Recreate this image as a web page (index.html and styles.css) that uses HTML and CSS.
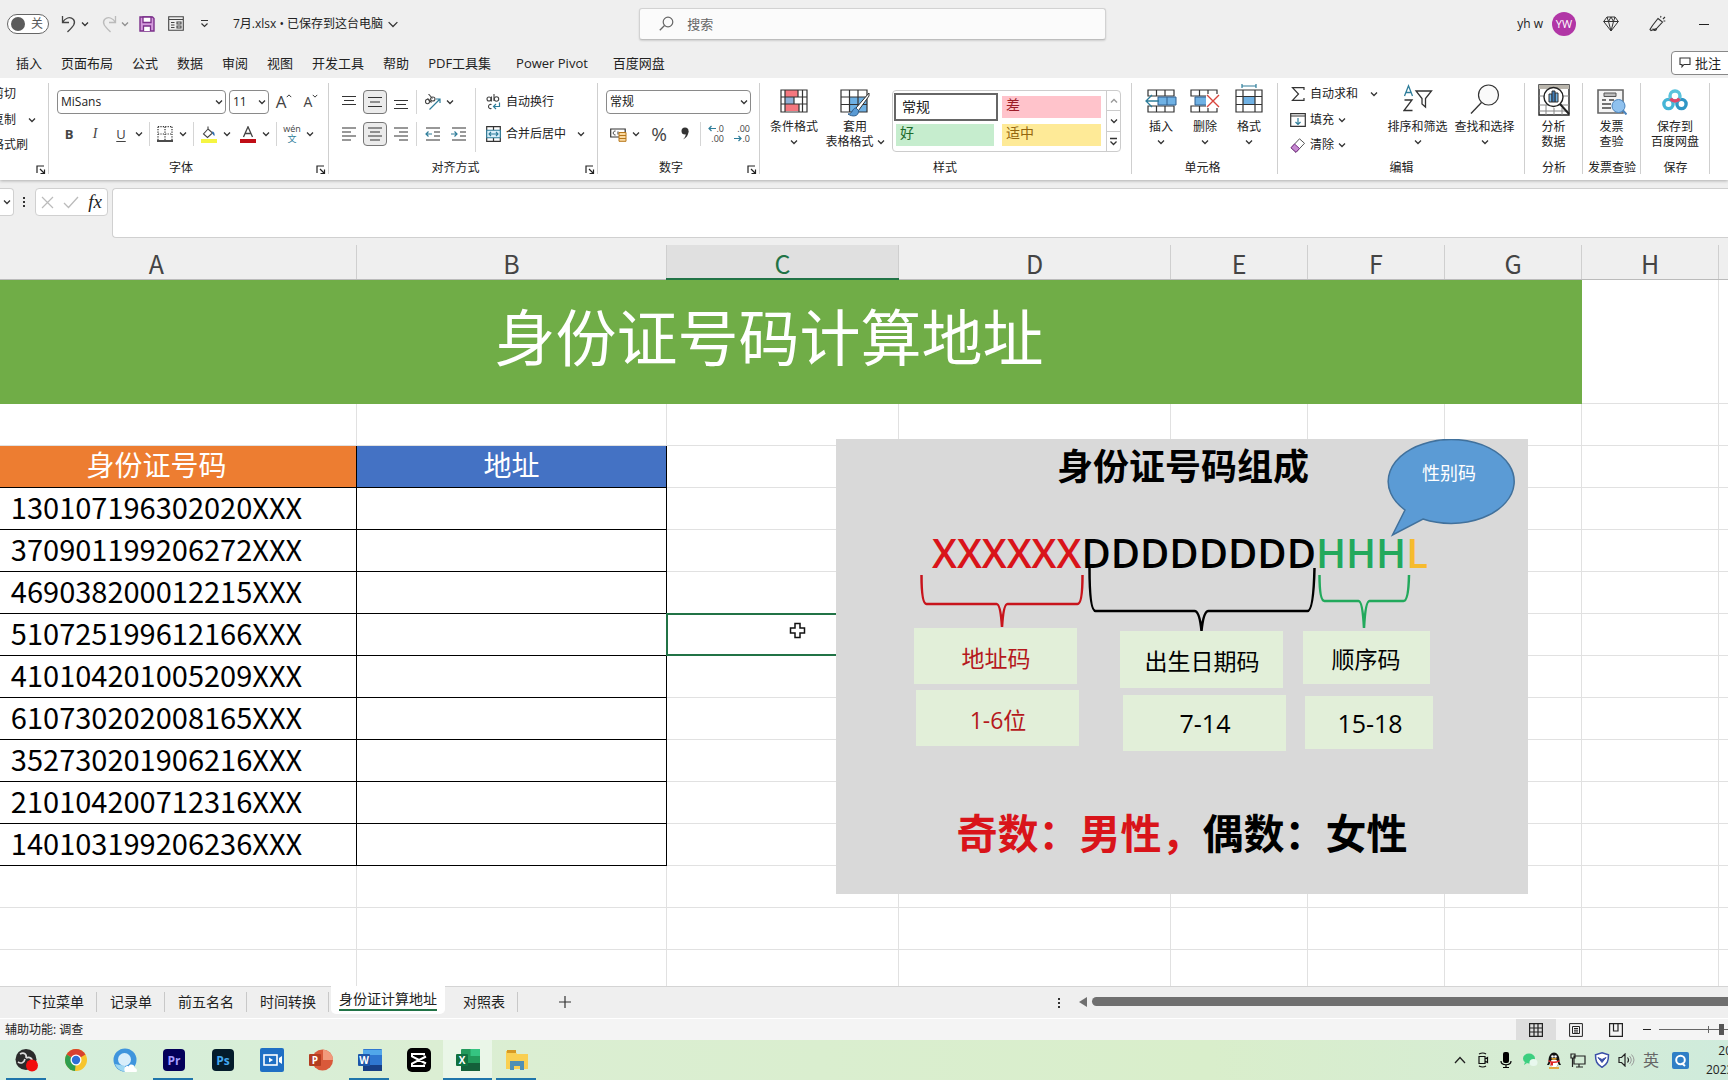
FILE: index.html
```html
<!DOCTYPE html>
<html lang="zh-CN">
<head>
    <meta charset="UTF-8">
    <meta name="viewport" content="width=device-width, initial-scale=1.0">
    <title>7月.xlsx</title>
    <link rel="stylesheet" href="styles.css">
</head>
<body>
    <!-- 公用图标 -->
    <svg class="defs" width="0" height="0">
        <symbol id="chev" viewBox="0 0 8 8"><path d="M1 2.5l3 3 3-3" fill="none" stroke="currentColor" stroke-width="1.3"/></symbol>
        <symbol id="launcher" viewBox="0 0 10 10"><path d="M1 8V1h7M4 4l4 4M8.5 4.5v4h-4" fill="none" stroke="currentColor" stroke-width="1.2"/></symbol>
    </svg>

    <!-- 标题栏 -->
    <header class="titlebar">
        <div class="quick">
            <button class="toggle" aria-label="自动保存"><i></i>关</button>
            <button class="qbtn"><svg width="16" height="18" viewBox="0 0 16 18"><path d="M1.5 1v6.500h6.500M1.500 7.500C4 3 9 1 12.500 4.500c3 4-1 7.500-6 12.500" fill="none" stroke="#444" stroke-width="1.300"/></svg></button>
            <svg class="chev"><use href="#chev"/></svg>
            <button class="qbtn off"><svg width="16" height="18" viewBox="0 0 16 18"><path d="M14.500 1v6.500H8M14.500 7.500C12 3 7 1 3.500 4.500c-3 4 1 7.500 6 12.500" fill="none" stroke="#888" stroke-width="1.300"/></svg></button>
            <svg class="chev off"><use href="#chev"/></svg>
            <button class="qbtn save"><svg width="16" height="16" viewBox="0 0 16 16"><path d="M1 1h12.500L15 2.500V15H1z" fill="#d49bdc" stroke="#7b2f8a" stroke-width="1.400"/><path d="M4 1h8v5.500H4zM4.500 15v-5h7v5" fill="#fff" stroke="#7b2f8a" stroke-width="1.300"/></svg></button>
            <button class="qbtn form"><svg width="16" height="15" viewBox="0 0 16 15"><path d="M.7.7h14.600v13.600H.7zM.7 3.500h14.600M3 6.500h3.500M3 9h3.500M3 11.500h3.500M9 6h4v2H9zM9 10h4v2H9z" fill="none" stroke="#444" stroke-width="1.100"/></svg></button>
            <button class="qbtn more"><svg width="9" height="9" viewBox="0 0 9 9"><path d="M1 1.500h7M1.500 4.500l3 3 3-3" fill="none" stroke="#333" stroke-width="1.200"/></svg></button>
            <button class="filename">7月.xlsx • 已保存到这台电脑<svg width="10" height="10" viewBox="0 0 8 8"><path d="M.5 2.500l3.500 3.500 3.500-3.500" fill="none" stroke="#333"/></svg></button>
        </div>
        <label class="search">
            <svg width="15" height="15" viewBox="0 0 15 15"><circle cx="9" cy="6" r="4.800" fill="none" stroke="#666" stroke-width="1.200"/><path d="M5.500 9.500L.8 14.200" stroke="#666" stroke-width="1.300"/></svg>
            <input type="text" placeholder="搜索" aria-label="搜索">
        </label>
        <div class="account">
            <span>yh w</span>
            <span class="avatar">YW</span>
            <button class="abtn"><svg width="16" height="16" viewBox="0 0 16 16"><path d="M4 1h8l3.300 4.500L8 15 .7 5.500zM.7 5.500h14.600M4 1l1.500 4.500L8 15l2.500-9.500L12 1M5.500 5.500L8 1l2.500 4.500" fill="none" stroke="#333"/></svg></button>
            <button class="abtn"><svg width="17" height="17" viewBox="0 0 17 17"><path d="M9 3.500l4.500 3.500-6 6.500-5.500 2-1-1 2.500-4zM4 13.500c0 3 4 2 3.500 0M11.500 2.500L12 1M14 4l2-2M14.500 6h1.800" fill="none" stroke="#333" stroke-width="1.100"/></svg></button>
            <button class="abtn min"><svg width="10" height="10" viewBox="0 0 10 10"><path d="M0 5.500h10" stroke="#222"/></svg></button>
        </div>
    </header>

    <nav class="menu">
        <a href="#">插入</a><a href="#">页面布局</a><a href="#">公式</a><a href="#">数据</a><a href="#">审阅</a><a href="#">视图</a><a href="#">开发工具</a><a href="#">帮助</a><a href="#">PDF工具集</a><a class="wide" href="#">Power Pivot</a><a href="#">百度网盘</a>
        <button class="comment"><svg width="12" height="11" viewBox="0 0 12 11"><path d="M1 1h10v6.500H5L3 9.800V7.500H1z" fill="none" stroke="#333" stroke-width="1.100"/></svg>批注</button>
    </nav>

    <!-- 功能区 -->
    <section class="ribbon">
        <div class="group g-clip">
            <div class="tools stack">
                <button>剪切</button>
                <button>复制<svg class="chev far"><use href="#chev"/></svg></button>
                <button>格式刷</button>
            </div>
            <div class="cap"><svg class="launch"><use href="#launcher"/></svg></div>
        </div>

        <div class="group g-font">
            <div class="tools rows">
                <div class="row first">
                    <span class="pick pick-font"><select aria-label="字体"><option>MiSans</option></select><svg class="chev"><use href="#chev"/></svg></span>
                    <span class="pick pick-size"><select aria-label="字号"><option>11</option></select><svg class="chev"><use href="#chev"/></svg></span>
                    <button class="tool grow big">A<svg class="chev up"><use href="#chev"/></svg></button>
                    <button class="tool grow">A<svg class="chev"><use href="#chev"/></svg></button>
                </div>
                <div class="row">
                    <button class="tool bold">B</button><i class="gap"></i>
                    <button class="tool italic">I</button><i class="gap"></i>
                    <button class="tool under">U</button><svg class="chev"><use href="#chev"/></svg>
                    <i class="sep"></i>
                    <button class="tool"><svg width="16" height="16" viewBox="0 0 16 16"><path d="M1 .7h14M1 .7V15M15 .7V15M8 .7V15M1 8h14" fill="none" stroke="#333" stroke-width="1.200" stroke-dasharray="1.200 1.200"/><path d="M0 15h16" stroke="#111" stroke-width="1.500"/></svg></button><svg class="chev"><use href="#chev"/></svg>
                    <i class="sep"></i>
                    <button class="tool"><svg width="16" height="17" viewBox="0 0 16 17"><path d="M7 3L2.500 8l4 3.500L11.500 7 7 3V.5" fill="#fff" stroke="#444" stroke-width="1.100"/><path d="M11 5.500c2 0 3 2 2.500 4.500-1.500-1-2-2.500-2.500-4.500z" fill="#2b6cb0"/><path d="M0 13h16v4H0z" fill="#f5f542"/></svg></button><svg class="chev"><use href="#chev"/></svg><i class="gap"></i>
                    <button class="tool"><svg width="16" height="17" viewBox="0 0 16 17"><path d="M3.500 11L8 .8 12.500 11M5 7.500h6" fill="none" stroke="#444" stroke-width="1.300"/><path d="M0 13h16v4H0z" fill="#c00d16"/></svg></button><svg class="chev"><use href="#chev"/></svg>
                    <i class="sep"></i>
                    <button class="tool pinyin"><span>wén</span><span class="blue">文</span></button><svg class="chev"><use href="#chev"/></svg>
                </div>
            </div>
            <div class="cap">字体<svg class="launch"><use href="#launcher"/></svg></div>
        </div>

        <div class="group g-align">
            <div class="tools side">
                <div class="rows">
                    <div class="row first gaps">
                        <button class="tool"><svg width="14" height="14"><path d="M0 1.500h14M2 5.500h10M0 9.500h14" stroke="#333" stroke-width="1.200"/></svg></button>
                        <button class="tool on"><svg width="14" height="14"><path d="M0 2.500h14M2 7h10M0 11.500h14" stroke="#333" stroke-width="1.200"/></svg></button>
                        <button class="tool"><svg width="14" height="14"><path d="M0 5.500h14M2 9.500h10M0 13.500h14" stroke="#333" stroke-width="1.200"/></svg></button>
                        <i class="sep"></i>
                        <button class="tool"><svg width="17" height="17" viewBox="0 0 17 17"><g fill="none" stroke="#444" stroke-width="1.100"><ellipse cx="3.500" cy="7.500" rx="2" ry="2.200"/><path d="M3.500 4.500l4 4"/><ellipse cx="8.800" cy="5" rx="2.200" ry="2"/><path d="M4.500 0l4 4.500"/></g><path d="M5.500 15.500L15.500 5.500M12 5h4v4" fill="none" stroke="#2e7d9a" stroke-width="1.200"/></svg></button><svg class="chev"><use href="#chev"/></svg>
                    </div>
                    <div class="row gaps">
                        <button class="tool"><svg width="14" height="14"><path d="M0 1h14M0 5h9M0 9h14M0 13h9" stroke="#333" stroke-width="1.200"/></svg></button>
                        <button class="tool on"><svg width="14" height="14"><path d="M0 1h14M2 5h10M0 9h14M2 13h10" stroke="#333" stroke-width="1.200"/></svg></button>
                        <button class="tool"><svg width="14" height="14"><path d="M0 1h14M5 5h9M0 9h14M5 13h9" stroke="#333" stroke-width="1.200"/></svg></button>
                        <i class="sep"></i>
                        <button class="tool"><svg width="15" height="14"><path d="M1 1h14M9 5h6M9 9h6M1 13h14" stroke="#333" stroke-width="1.200"/><path d="M7 7H1M3.500 4.500L1 7l2.500 2.500" fill="none" stroke="#2e7d9a" stroke-width="1.200"/></svg></button>
                        <button class="tool"><svg width="15" height="14"><path d="M1 1h14M9 5h6M9 9h6M1 13h14" stroke="#333" stroke-width="1.200"/><path d="M0 7h6M3.500 4.500L6 7 3.500 9.500" fill="none" stroke="#2e7d9a" stroke-width="1.200"/></svg></button>
                    </div>
                </div>
                <i class="sep tall"></i>
                <div class="rows wraps">
                    <button class="row first txt"><svg width="15" height="17" viewBox="0 0 15 17"><g fill="none" stroke="#444" stroke-width="1.100"><circle cx="3" cy="5" r="2"/><path d="M5.500 2.500v5M8 0v7"/><circle cx="10.500" cy="5" r="2.200"/><path d="M5.500 10.500c-4-1-4 5 0 4"/></g><path d="M13.500 8.500v4H7.500M10 10l-2.500 2.500L10 15" fill="none" stroke="#2e7d9a" stroke-width="1.200"/></svg>自动换行</button>
                    <button class="row txt"><svg width="15" height="16" viewBox="0 0 15 16"><path d="M.7.7h13.600v14.600H.7zM7.500.7v3.500M7.500 12v3.500" fill="none" stroke="#333" stroke-width="1.200"/><path d="M.7 4.200h13.600v7.600H.7z" fill="#d9effa" stroke="#2e7d9a" stroke-width="1.100"/><path d="M3 8h9M5 6L3 8l2 2M10 6l2 2-2 2" fill="none" stroke="#2e7d9a" stroke-width="1.100"/></svg>合并后居中<svg class="chev far"><use href="#chev"/></svg></button>
                </div>
            </div>
            <div class="cap">对齐方式<svg class="launch"><use href="#launcher"/></svg></div>
        </div>

        <div class="group g-num">
            <div class="tools rows">
                <div class="row first">
                    <span class="pick pick-num"><select aria-label="数字格式"><option>常规</option></select><svg class="chev"><use href="#chev"/></svg></span>
                </div>
                <div class="row">
                    <button class="tool"><svg width="17" height="15" viewBox="0 0 17 15"><path d="M.7 2h14.500v8H.7z" fill="none" stroke="#333" stroke-width="1.200"/><path d="M5.500 4c-3 0-3 4 0 4M8 4.500v3" fill="none" stroke="#333"/><path d="M9 5.500h7v8.800H9z" fill="#fbd9a0" stroke="#b7771a"/><path d="M9 8.500h7M9 11.500h7" stroke="#b7771a"/></svg></button><svg class="chev"><use href="#chev"/></svg>
                    <i class="gap wide"></i>
                    <button class="tool percent">%</button><i class="gap"></i>
                    <button class="tool"><svg width="9" height="14" viewBox="0 0 9 14"><circle cx="4" cy="4" r="3.500" fill="#333"/><path d="M7.500 4c0 4-2 7-5.500 8.500C4.500 10 5 8 5 5" fill="#333"/></svg></button><i class="sep"></i>
                    <button class="tool dec"><span><svg width="8" height="7"><path d="M8 3.500H1M3.500 1L1 3.500 3.500 6" fill="none" stroke="#2e7d9a" stroke-width="1.200"/></svg>.0</span><span>.00</span></button><i class="gap"></i>
                    <button class="tool dec"><span>.00</span><span><svg width="8" height="7"><path d="M0 3.500h7M4.500 1L7 3.500 4.500 6" fill="none" stroke="#2e7d9a" stroke-width="1.200"/></svg>.0</span></button>
                </div>
            </div>
            <div class="cap">数字<svg class="launch"><use href="#launcher"/></svg></div>
        </div>

        <div class="group g-style">
            <div class="tools side">
                <button class="large"><span class="ico"><svg width="28" height="24" viewBox="0 0 28 24"><path d="M5 1h13v7H5zM5 15h14v7H5z" fill="#f4777f"/><path d="M5 8h9v7H5z" fill="#8fb0d6"/><path d="M1 1h26v22H1zM5 1v22M1 8h26M1 15h26M18 1v7M22.500 1v22M14 8v7M19 15v8" fill="none" stroke="#333" stroke-width="1.200"/></svg></span>条件格式<br><svg class="chev"><use href="#chev"/></svg></button>
                <button class="large"><span class="ico"><svg width="30" height="28" viewBox="0 0 30 28"><path d="M10 8h17v15H10z" fill="#6fb1e4"/><path d="M1 1h26v22H1zM9.500 1v22M18 1v22M1 8h26M1 15.500h26" fill="none" stroke="#333" stroke-width="1.200"/><path d="M29 4L16 19l2.500 2.500L29 7z" fill="#fff" stroke="#333"/><path d="M16 19c-4 0-3 6-8 6 4 3 11 3 10.500-3.500z" fill="#5a9bd5" stroke="#2f5f8f"/></svg></span>套用<br>表格格式 <svg class="chev"><use href="#chev"/></svg></button>
                <div class="gallery">
                    <button class="cell normal">常规</button><button class="cell bad">差</button>
                    <button class="cell good">好</button><button class="cell mid">适中</button>
                    <div class="scroller">
                        <button class="off"><svg class="chev up"><use href="#chev"/></svg></button>
                        <button><svg class="chev"><use href="#chev"/></svg></button>
                        <button><svg width="9" height="9" viewBox="0 0 9 9"><path d="M1 1.500h7M1.500 4.500l3 3 3-3" fill="none" stroke="#333" stroke-width="1.300"/></svg></button>
                    </div>
                </div>
            </div>
            <div class="cap">样式</div>
        </div>

        <div class="group g-cells">
            <div class="tools side">
                <button class="large"><span class="ico"><svg width="32" height="24" viewBox="0 0 32 24"><path d="M3 1h26v6H3zM3 17h26v6H3zM11.500 1v6M20 1v6M11.500 17v6M20 17v6" fill="none" stroke="#333" stroke-width="1.200"/><path d="M13 8h18v8H13z" fill="#6fb1e4" stroke="#2f5f8f"/><path d="M22 8v8" stroke="#2f5f8f"/><path d="M14 12H1M7 6l-6 6 6 6" fill="none" stroke="#2e7d9a" stroke-width="1.300"/></svg></span>插入<br><svg class="chev"><use href="#chev"/></svg></button>
                <button class="large"><span class="ico"><svg width="30" height="24" viewBox="0 0 30 24"><path d="M1 1h26v6H1zM1 17h26v6H1zM9.500 1v6M18 1v6M9.500 17v6M18 17v6" fill="none" stroke="#333" stroke-width="1.200"/><path d="M5 8h13v8H5z" fill="#6fb1e4" stroke="#2f5f8f"/><path d="M16 5h13v14H16z" fill="#fff"/><path d="M17 6l12 12M29 6L17 18" stroke="#d9453c" stroke-width="1.400"/></svg></span>删除<br><svg class="chev"><use href="#chev"/></svg></button>
                <button class="large"><span class="ico tall"><svg width="28" height="29" viewBox="0 0 28 29"><path d="M8 12.500h12v8H8z" fill="#6fb1e4"/><path d="M1 6h26v22H1zM8 6v22M20 6v22M1 12.500h26M1 20.500h26" fill="none" stroke="#333" stroke-width="1.200"/><path d="M7 2h14M7 0v4M21 0v4" stroke="#2e7d9a" stroke-width="1.200"/></svg></span>格式<br><svg class="chev"><use href="#chev"/></svg></button>
            </div>
            <div class="cap">单元格</div>
        </div>

        <div class="group g-edit">
            <div class="tools side">
                <div class="stack">
                    <button><svg width="16" height="14" viewBox="0 0 16 14"><path d="M14 3V.7H2.500L8.500 7l-6 6.300H14V11" fill="none" stroke="#333" stroke-width="1.200"/></svg>自动求和<svg class="chev far"><use href="#chev"/></svg></button>
                    <button><svg width="16" height="14" viewBox="0 0 16 14"><path d="M.7.7h14.600v12.600H.7zM.7 3h14.600" fill="none" stroke="#333" stroke-width="1.200"/><path d="M8 5v6.500M5.500 9L8 11.500 10.500 9" fill="none" stroke="#2e7d9a" stroke-width="1.200"/></svg>填充<svg class="chev"><use href="#chev"/></svg></button>
                    <button><svg width="16" height="15" viewBox="0 0 16 15"><path d="M9.500.8l5 4.500-8.500 9-5-4.500z" fill="#fff" stroke="#555"/><path d="M4.500 6L1 9.800l5 4.500L9.500 10.500z" fill="#c68ad0" stroke="#7b2f8a"/></svg>清除<svg class="chev"><use href="#chev"/></svg></button>
                </div>
                <button class="large wide"><span class="ico tall"><svg width="30" height="28" viewBox="0 0 30 28"><path d="M1.500 12L5.500 1.800 9.500 12M3 8.500h5" fill="none" stroke="#2e7d9a" stroke-width="1.300"/><path d="M1.500 16h7.500l-8 10.500h8.500" fill="none" stroke="#333" stroke-width="1.300"/><path d="M13 7h15.500l-6 7.500V23l-3.500-3v-5.500z" fill="none" stroke="#333" stroke-width="1.300"/></svg></span>排序和筛选<br><svg class="chev"><use href="#chev"/></svg></button>
                <button class="large wide"><span class="ico tall"><svg width="30" height="30" viewBox="0 0 30 30"><circle cx="18.500" cy="11" r="10" fill="#fafafa" stroke="#333" stroke-width="1.200"/><path d="M11.500 18.500L1 29.500" stroke="#333" stroke-width="1.300"/></svg></span>查找和选择<br><svg class="chev"><use href="#chev"/></svg></button>
            </div>
            <div class="cap">编辑</div>
        </div>

        <div class="group g-extra">
            <div class="tools side">
                <button class="large"><span class="ico tall"><svg width="32" height="32" viewBox="0 0 32 32"><path d="M1 1h30v30H1z" fill="#fff" stroke="#222" stroke-width="1.400"/><path d="M1 1h30v4H1z" fill="#b9b5ac"/><path d="M1 12h30M1 21h30M1 27h30M8 21v10M16 24v7M24 24v7" stroke="#888"/><circle cx="15.500" cy="13" r="9.500" fill="#fff" stroke="#222" stroke-width="1.400"/><path d="M11 10h3v8h-3zM17 9h3v9h-3z" fill="#6fb1e4" stroke="#333"/><path d="M14 7h3v11h-3z" fill="#3d7ab5" stroke="#333"/><path d="M22 20l9 10" stroke="#222" stroke-width="2"/></svg></span>分析<br>数据</button>
            </div>
            <div class="cap">分析</div>
        </div>
        <div class="group g-extra">
            <div class="tools side">
                <button class="large"><span class="ico"><svg width="30" height="26" viewBox="0 0 30 26"><path d="M1 1h25v23H1z" fill="#f4f4f4" stroke="#666" stroke-width="1.600"/><path d="M7 4h12v3.500H7z" fill="#bbb" stroke="#555"/><path d="M5 11h4M5 15h9M5 19h9M12 11h5" stroke="#444" stroke-width="1.400"/><circle cx="21.500" cy="17" r="6.500" fill="#8fc1ee" stroke="#4a84bd"/><path d="M26 21.500l3.500 4" stroke="#4a84bd" stroke-width="2"/></svg></span>发票<br>查验</button>
            </div>
            <div class="cap">发票查验</div>
        </div>
        <div class="group g-save">
            <div class="tools side">
                <button class="large"><span class="ico"><svg width="26" height="22" viewBox="0 0 26 22"><g fill="none" stroke-width="3.400"><circle cx="6.500" cy="15" r="4.600" stroke="#45b5d6"/><circle cx="19.500" cy="15" r="4.600" stroke="#2f96c5"/><circle cx="13" cy="7" r="5" stroke="#5ac3dc"/><path d="M8.700 9.500a5 5 0 0 0 8.600 0" stroke="#e0486a"/></g></svg></span>保存到<br>百度网盘</button>
            </div>
            <div class="cap">保存</div>
        </div>
    </section>

    <!-- 编辑栏 -->
    <section class="formula">
        <button class="namebox"><svg class="chev"><use href="#chev"/></svg></button>
        <i class="dots"></i>
        <div class="fx">
            <button><svg width="13" height="13"><path d="M1 1l11 11M12 1L1 12" stroke="#bbb" stroke-width="1.200"/></svg></button>
            <button><svg width="16" height="13"><path d="M1 7l4.500 4.500L15 1" fill="none" stroke="#bbb" stroke-width="1.300"/></svg></button>
            <button class="fxi">fx</button>
        </div>
        <input class="fbar" type="text" aria-label="编辑栏">
    </section>

    <!-- 工作表 -->
    <main class="sheet">
        <table>
            <colgroup><col class="ca"><col class="cb"><col class="cc"><col class="cd"><col class="ce"><col class="ce"><col class="ce"><col class="ce"><col class="ce"></colgroup>
            <thead>
                <tr><th>A</th><th>B</th><th class="cur">C</th><th>D</th><th>E</th><th>F</th><th>G</th><th>H</th><th></th></tr>
            </thead>
            <tbody>
                <tr class="head"><td class="title" colspan="7">身份证号码计算地址</td><td></td><td></td></tr>
                <tr class="blank"><td></td><td></td><td></td><td></td><td></td><td></td><td></td><td></td><td></td></tr>
                <tr><td class="k orange">身份证号码</td><td class="k blue">地址</td><td></td><td></td><td></td><td></td><td></td><td></td><td></td></tr>
                <tr><td class="k">130107196302020XXX</td><td class="k"></td><td></td><td></td><td></td><td></td><td></td><td></td><td></td></tr>
                <tr><td class="k">370901199206272XXX</td><td class="k"></td><td></td><td></td><td></td><td></td><td></td><td></td><td></td></tr>
                <tr><td class="k">469038200012215XXX</td><td class="k"></td><td></td><td></td><td></td><td></td><td></td><td></td><td></td></tr>
                <tr><td class="k">510725199612166XXX</td><td class="k"></td><td class="sel"></td><td></td><td></td><td></td><td></td><td></td><td></td></tr>
                <tr><td class="k">410104201005209XXX</td><td class="k"></td><td></td><td></td><td></td><td></td><td></td><td></td><td></td></tr>
                <tr><td class="k">610730202008165XXX</td><td class="k"></td><td></td><td></td><td></td><td></td><td></td><td></td><td></td></tr>
                <tr><td class="k">352730201906216XXX</td><td class="k"></td><td></td><td></td><td></td><td></td><td></td><td></td><td></td></tr>
                <tr><td class="k">210104200712316XXX</td><td class="k"></td><td></td><td></td><td></td><td></td><td></td><td></td><td></td></tr>
                <tr><td class="k">140103199206236XXX</td><td class="k"></td><td></td><td></td><td></td><td></td><td></td><td></td><td></td></tr>
                <tr><td></td><td></td><td></td><td></td><td></td><td></td><td></td><td></td><td></td></tr>
                <tr><td></td><td></td><td></td><td></td><td></td><td></td><td></td><td></td><td></td></tr>
                <tr><td></td><td></td><td></td><td></td><td></td><td></td><td></td><td></td><td></td></tr>
            </tbody>
        </table>

        <!-- 浮动图片：号码组成 -->
        <svg class="chart" width="692" height="455" viewBox="0 0 692 455">
            <rect width="692" height="455" fill="#d9d9d9"/>
            <text class="t-title" x="347" y="41">身份证号码组成</text>
            <text class="t-code" x="96" y="129"><tspan fill="#d9141a">XXXXXX</tspan><tspan fill="#000">DDDDDDDD</tspan><tspan fill="#22a95c">HHH</tspan><tspan fill="#f6bb2e">L</tspan></text>
            <g fill="none" stroke-width="2.500">
                <path stroke="#c8141c" d="M85.500 136q0 29 5 29h70q4 0 5.500 23q1.500-23 5.500-23h70q5 0 5-29"/>
                <path stroke="#000" d="M253.500 129q0 43 6 43h99q5 0 7 20q2-20 7-20h99q6 0 7-43"/>
                <path stroke="#22a95c" d="M483.500 136q0 26 5 26h34q4 0 5.500 27q1.500-27 5.500-27h34q5 0 5.500-26"/>
            </g>
            <g fill="#e2efd9">
                <rect x="78" y="189" width="163" height="56"/>
                <rect x="80" y="251" width="163" height="56"/>
                <rect x="284" y="192" width="163" height="57"/>
                <rect x="287" y="256" width="163" height="56"/>
                <rect x="467" y="192" width="127" height="53"/>
                <rect x="469" y="257" width="128" height="53"/>
            </g>
            <g class="t-box">
                <text x="160" y="228" fill="#b5181c">地址码</text>
                <text x="162" y="290" fill="#b5181c">1-6位</text>
                <text x="366" y="231">出生日期码</text>
                <text class="num" x="369" y="294">7-14</text>
                <text x="530" y="229">顺序码</text>
                <text class="num" x="534" y="294">15-18</text>
            </g>
            <path d="M569 71A63 42 0 1 1 587 80L556.500 96z" fill="#5b9bd5" stroke="#41719c" stroke-width="1.500"/>
            <text class="t-bubble" x="613" y="41">性别码</text>
            <text class="t-foot" x="346" y="410"><tspan fill="#d9141a">奇数：男性，</tspan><tspan>偶数：女性</tspan></text>
        </svg>
        <svg class="cursor" width="17" height="17" viewBox="0 0 17 17"><path d="M6 1.500h5V6h4.500v5H11v4.500H6V11H1.500V6H6z" fill="#fff" stroke="#111" stroke-width="1.500"/></svg>
    </main>

    <!-- 工作表标签 -->
    <nav class="tabs">
        <a href="#">下拉菜单</a><a href="#">记录单</a><a href="#">前五名名</a><a href="#">时间转换</a><a class="active" href="#"><span>身份证计算地址</span></a><a href="#">对照表</a>
        <button class="add"><svg width="12" height="12"><path d="M6 0v12M0 6h12" stroke="#333" stroke-width="1.200"/></svg></button>
        <div class="hscroll">
            <i class="dots"></i>
            <svg width="8" height="10"><path d="M8 0v10L0 5z" fill="#6f6f6f"/></svg>
            <div class="bar"></div>
        </div>
    </nav>
    <footer class="status">
        <span>辅助功能: 调查</span>
        <div class="views">
            <button class="on"><svg width="14" height="14"><path d="M.6.6h12.800v12.800H.6zM5 .6v12.800M9 .6v12.800M.6 5h12.800M.6 9h12.800" fill="none" stroke="#222" stroke-width="1.200"/></svg></button>
            <button><svg width="14" height="14"><path d="M.6.6h12.800v12.800H.6zM3.500 3.500h7v7h-7zM5 5.500h4M5 7.200h4M5 9h4" fill="none" stroke="#222"/></svg></button>
            <button><svg width="14" height="14"><path d="M.6.6h12.800v12.800H.6zM4.500.6v7.400h4.500V.6" fill="none" stroke="#222" stroke-width="1.200"/></svg></button>
            <i class="minus"></i>
            <div class="zoom"><i class="tick"></i><i class="thumb"></i></div>
        </div>
    </footer>

    <!-- 任务栏 -->
    <footer class="taskbar">
        <div class="apps">
            <button class="run"><svg width="24" height="24" viewBox="0 0 24 24"><circle cx="11" cy="11.500" r="10.500" fill="#2b2b2b"/><path d="M5 6c4-2 7 0 6 4M11 10c4-2 7 1 6 5M10 11c-1 4-4 5-7 3" fill="none" stroke="#ddd" stroke-width="1.700"/><circle cx="17" cy="17.500" r="6" fill="#f20d0d"/></svg></button>
            <button><svg width="24" height="24" viewBox="0 0 24 24"><circle cx="12" cy="12" r="11" fill="#f7c52d"/><path d="M12 12L2.500 6.500A11 11 0 0 1 21.500 6.500z" fill="#d8412f"/><path d="M12 12L2.500 6.500A11 11 0 0 0 11 23z" fill="#2f9e4f"/><circle cx="12" cy="12" r="5.500" fill="#fff"/><circle cx="12" cy="12" r="4.200" fill="#2f6fd6"/></svg></button>
            <button><svg width="24" height="24" viewBox="0 0 24 24"><circle cx="12" cy="12" r="11.500" fill="#3f95dd"/><path d="M2 16a11.500 11.500 0 0 0 10 7.500V18z" fill="#9fd8f2"/><circle cx="11.500" cy="11.500" r="6.500" fill="#d8eefb"/><path d="M12 24c-2-4 1-7 3.500-5.500 2-4 7-1 6 1.500 2 0 3 2 2 4z" fill="#fff"/></svg></button>
            <button class="run"><svg width="22" height="22" viewBox="0 0 22 22"><rect width="22" height="22" rx="4" fill="#04005a"/><text x="11" y="15.500" class="adobe" fill="#a39bff">Pr</text></svg></button>
            <button><svg width="22" height="22" viewBox="0 0 22 22"><rect width="22" height="22" rx="4" fill="#041c2c"/><text x="11" y="15.500" class="adobe" fill="#43a8f0">Ps</text></svg></button>
            <button><svg width="24" height="24" viewBox="0 0 24 24"><rect width="24" height="24" rx="2" fill="#1f6fc4"/><rect x="4" y="7" width="13" height="10" fill="none" stroke="#fff" stroke-width="1.600"/><path d="M9 9.500v5l4-2.500zM19 10l3-2v8l-3-2z" fill="#fff"/></svg></button>
            <button><svg width="24" height="24" viewBox="0 0 24 24"><circle cx="13.500" cy="12" r="10.500" fill="#d9593a"/><path d="M14 1.500a10.500 10.500 0 0 1 10 10.500H14z" fill="#f29a7c"/><rect y="6" width="12" height="12" rx="1" fill="#b33c20"/><text x="6" y="16" class="office">P</text></svg></button>
            <button class="run"><svg width="24" height="24" viewBox="0 0 24 24"><rect x="5" y="1" width="19" height="22" rx="1" fill="#2f77d0"/><path d="M5 2h19v5H5z" fill="#51a7ea"/><path d="M5 17h19v6H5z" fill="#173f85"/><rect y="6" width="12" height="12" rx="1" fill="#1c56a8"/><text x="6" y="16" class="office">W</text></svg></button>
            <button><svg width="24" height="24" viewBox="0 0 24 24"><rect width="24" height="24" rx="5" fill="#000"/><path d="M17 7.500V6H5v2.500l14 7M17 16.500V18H5v-2.500l14-7" fill="none" stroke="#fff" stroke-width="2"/></svg></button>
            <button class="run front"><svg width="24" height="24" viewBox="0 0 24 24"><rect x="5" y="1" width="19" height="22" rx="1" fill="#229a5b"/><path d="M14.500 1H24v7h-9.500z" fill="#35c481"/><path d="M5 15h19v8H5z" fill="#14603a"/><rect y="6" width="12" height="12" rx="1" fill="#107140"/><text x="6" y="16" class="office">X</text></svg></button>
            <button class="run"><svg width="22" height="22" viewBox="0 0 22 22"><path d="M0 2h9l2 3h11v15H0z" fill="#f9cf52"/><path d="M1 1h9v3H1z" fill="#d69a25"/><path d="M4 21v-9h14v9h-4v-4H8v4z" fill="#4f8fb5"/></svg></button>
        </div>
        <div class="tray">
            <svg width="12" height="8"><path d="M1 7l5-5.500L11 7" fill="none" stroke="#222" stroke-width="1.300"/></svg>
            <svg width="14" height="16" viewBox="0 0 14 16"><path d="M3 4.500h6v7H3zM9 7l2.500-1.500v5L9 9M3 2q4-2 7 0M3 14q4 2 7 0" fill="none" stroke="#111" stroke-width="1.200"/></svg>
            <svg width="12" height="16" viewBox="0 0 12 16"><rect x="3" width="6" height="11" rx="2" fill="#000"/><path d="M1 9c0 5 10 5 10 0M6 13v3M3 15.500h6" fill="none" stroke="#000" stroke-width="1.200"/></svg>
            <svg width="16" height="14" viewBox="0 0 16 14"><ellipse cx="7" cy="5.500" rx="6" ry="5" fill="#3ccf7f"/><path d="M3 9l-1 3 3-2z" fill="#3ccf7f"/><ellipse cx="11.500" cy="9.500" rx="4" ry="3.500" fill="#e8f8ee"/></svg>
            <svg width="16" height="17" viewBox="0 0 16 17"><ellipse cx="8" cy="8" rx="5.500" ry="7.500" fill="#111"/><path d="M3 9L1 13h2zM13 9l2 4h-2z" fill="#111"/><ellipse cx="8" cy="11.500" rx="4" ry="4" fill="#fff"/><path d="M2.500 8q5.500 3 11 0v1.500q-5.500 3-11 0zM4.500 10h2.500v3.500H4.500z" fill="#e02424"/><circle cx="6.500" cy="4.500" r="1.300" fill="#fff"/><circle cx="9.500" cy="4.500" r="1.300" fill="#fff"/><path d="M5.500 6.800h5" stroke="#f2a922" stroke-width="1.400"/><path d="M3 16h10" stroke="#e59a1c" stroke-width="1.600"/></svg>
            <svg width="16" height="15" viewBox="0 0 16 15"><path d="M4 3h11v8H4zM9 11v3M6 14h7M1 1h4v4H1zM2.500 5v9" fill="none" stroke="#222" stroke-width="1.200"/></svg>
            <svg width="16" height="16" viewBox="0 0 16 16"><path d="M8 .8l6.500 2c0 6-1 9.500-6.500 12.500C2.500 12.300 1.500 8.800 1.500 2.800z" fill="#fff" stroke="#3a4fa8" stroke-width="1.500"/><path d="M4 5.500l4 5 4-5-4 2z" fill="#3a4fa8" stroke="#3a4fa8"/></svg>
            <svg width="17" height="14" viewBox="0 0 17 14"><path d="M1 4.500h2.500L7 1v12L3.500 9.500H1zM9.500 4.500q2 2.500 0 5" fill="none" stroke="#222" stroke-width="1.200"/><path d="M11.500 3q3.500 4 0 8M13.500 1.500q5 5.500 0 11" fill="none" stroke="#999"/></svg>
            <span class="ime">英</span>
            <svg width="17" height="17" viewBox="0 0 17 17"><rect width="17" height="17" rx="2" fill="#2f7fc6"/><circle cx="8.500" cy="8" r="4.300" fill="none" stroke="#fff" stroke-width="2"/><path d="M9.500 11l3.500 3" stroke="#fff" stroke-width="2"/></svg>
            <div class="clock">20<br>2023</div>
        </div>
    </footer>
</body>
</html>
```

FILE: styles.css
```css
* { box-sizing: border-box; }
body {
    margin: 0;
    height: 100vh;
    display: flex;
    flex-direction: column;
    overflow: hidden;
    background: #efefef;
    color: #222;
    font: 12px/16px "Open Sans", "Noto Sans CJK SC", sans-serif;
}
button {
    border: 0;
    padding: 0;
    background: none;
    font: inherit;
    color: inherit;
}
a { color: inherit; text-decoration: none; }
svg { flex: none; }
.defs { position: absolute; }
.chev { width: 8px; height: 8px; color: #333; }
.off { opacity: 0.5; }

/* 标题栏 */
.titlebar {
    display: grid;
    grid-template-columns: 37% 27% 1fr;
    align-items: center;
    height: 47px;
    flex: none;
}
.quick { display: flex; align-items: center; padding-left: 7px; }
.quick svg { display: block; }
.toggle {
    display: flex;
    align-items: center;
    justify-content: space-between;
    width: 42px;
    height: 20px;
    padding: 0 5px 0 3px;
    border: 1px solid #666;
    border-radius: 10px;
    background: #fff;
    color: #555;
    margin-right: 12px;
}
.toggle i { width: 14px; height: 14px; border-radius: 50%; background: #5c5c5c; }
.quick .chev { margin: 0 12px 0 4px; }
.quick .chev.off { margin-right: 10px; }
.save { margin-right: 13px; }
.form { margin-right: 16px; }
.more { margin-right: 24px; }
.filename { display: flex; align-items: center; gap: 5px; white-space: nowrap; }
.search {
    display: flex;
    align-items: center;
    gap: 13px;
    height: 32px;
    padding-left: 19px;
    background: #fbfbfb;
    border: 1px solid #d2d2d2;
    border-bottom-color: #bdbdbd;
    border-radius: 3px;
    box-shadow: 0 1px 2px #0002;
}
.search input {
    flex: 1;
    border: 0;
    outline: 0;
    padding: 0;
    background: none;
    font: inherit;
    font-size: 13px;
}
.search input::placeholder { color: #666; }
.account { display: flex; align-items: center; justify-content: flex-end; padding-right: 19px; }
.avatar {
    width: 24px;
    height: 24px;
    margin: 0 27px 0 9px;
    border-radius: 50%;
    background: #b136a6;
    color: #fff;
    font-size: 11px;
    line-height: 24px;
    text-align: center;
}
.abtn { margin-right: 30px; display: flex; }
.abtn.min { margin: 0 0 0 3px; }

/* 选项卡 */
.menu {
    display: flex;
    align-items: center;
    gap: 19px;
    height: 31px;
    padding-left: 16px;
    font-size: 13px;
    white-space: nowrap;
    flex: none;
}
.menu .wide { margin: 0 6px; }
.comment {
    display: flex;
    align-items: center;
    gap: 4px;
    flex: none;
    height: 24px;
    margin-left: auto;
    margin-right: -6px;
    padding: 0 12px 0 7px;
    border: 1px solid #888;
    border-radius: 4px;
    background: #fff;
}

/* 功能区 */
.ribbon {
    display: flex;
    flex: none;
    height: 102px;
    background: #fff;
    box-shadow: 0 1px 3px #0004;
    overflow: hidden;
    clip-path: inset(0 0 -5px 0);
}
.group {
    position: relative;
    display: flex;
    flex-direction: column;
    flex: none;
    white-space: nowrap;
}
.group::after {
    content: "";
    position: absolute;
    right: 0;
    top: 5px;
    bottom: 6px;
    width: 1px;
    background: #cfcfcf;
}
.g-clip { width: 49px; }
.g-font { width: 280px; padding-left: 8px; }
.g-align { width: 269px; padding-left: 8px; }
.g-num { width: 162px; padding-left: 8px; }
.g-style { width: 372px; padding-left: 10px; }
.g-cells { width: 146px; padding-left: 7px; }
.g-edit { width: 247px; padding-left: 12px; }
.g-extra { width: 58px; }
.g-save { width: 69px; padding-left: 4px; }
.tools { height: 80px; }
.side { display: flex; }
.rows { display: flex; flex-direction: column; padding-top: 12px; gap: 8px; }
.row { display: flex; align-items: center; height: 24px; }
.gaps { gap: 2px; }
.gaps .sep { margin: 0 1px; }
.cap {
    height: 22px;
    line-height: 20px;
    text-align: center;
    padding-right: 24px;
}
.g-cells .cap, .g-edit .cap, .g-style .cap { padding-right: 12px; }
.g-extra .cap { padding-right: 0; }
.g-save .cap { padding-right: 4px; }
.launch { position: absolute; right: 3px; bottom: 5px; width: 10px; height: 10px; }
.stack { display: flex; flex-direction: column; padding-top: 3px; }
.stack button { display: flex; align-items: center; height: 26px; gap: 4px; }
.stack .far { margin-left: 8px; }
.g-clip .stack { margin-left: -8px; }
.tool {
    display: flex;
    align-items: center;
    justify-content: center;
    flex: none;
    width: 24px;
    height: 24px;
    color: #444;
}
.tool.on { border: 1px solid #777; border-radius: 4px; background: #ebebeb; }
.tool + .chev { margin: 0 3px 0 2px; }
.gaps .tool + .chev { margin: 0; }
.gap { width: 2px; }
.gap.wide { width: 4px; }
.sep { width: 1px; height: 24px; margin: 0 3px; background: #d5d5d5; }
.sep.tall { height: 64px; margin: 10px 10px 0 5px; }
.pick { position: relative; display: block; height: 24px; margin-right: 3px; }
.pick select {
    appearance: none;
    width: 100%;
    height: 24px;
    padding: 0 3px;
    border: 1px solid #8a8a8a;
    border-radius: 4px;
    background: #fff;
    color: #222;
    font: inherit;
}
.pick .chev { position: absolute; right: 3px; top: 8px; }
.pick-font { width: 169px; }
.pick-size { width: 40px; }
.pick-num { width: 145px; }
.grow { font-size: 14px; margin-right: 3px; }
.grow.big { font-size: 17px; }
.grow .chev { width: 6px; height: 6px; align-self: flex-start; margin-top: 3px; }
.bold { font-weight: 700; font-size: 13px; }
.italic { font: italic 14px "Liberation Serif", serif; }
.under { text-decoration: underline; text-underline-offset: 2px; font-size: 13px; }
.percent { font-size: 19px; }
.pinyin { flex-direction: column; font-size: 9px; line-height: 10px; }
.blue { color: #2e7d9a; }
.dec { flex-direction: column; align-items: flex-end; font-size: 9px; line-height: 10px; padding-right: 4px; }
.txt { gap: 5px; }
.txt .far { margin-left: 6px; }
.large {
    display: block;
    width: 48px;
    height: 80px;
    padding-top: 9px;
    line-height: 15px;
    text-align: center;
}
.large .ico { display: flex; align-items: flex-start; justify-content: center; height: 32px; padding-top: 2px; }
.large .ico.tall { padding-top: 0; margin-top: -3px; height: 35px; }
/* 按钮内容靠顶部排列 */
.large { display: flow-root; align-self: flex-start; height: auto; }
.g-style .large + .large { width: 62px; margin-left: 6px; }
.g-cells .large { width: 44px; }
.g-edit .stack { width: 94px; }
.large.wide { width: 67px; }
.g-extra .large { width: 57px; }
.g-save .large { width: 60px; }
.gallery {
    display: grid;
    grid-template-columns: 105px 103px 1fr;
    grid-template-rows: 30px 30px;
    width: 229px;
    height: 62px;
    margin: 12px 0 0 6px;
    border: 1px solid #ccc;
    border-radius: 4px;
}
.cell { text-align: left; font-size: 14px; line-height: 18px; padding: 0 4px; display: flex; }
.normal { border: 2px solid #666; margin: 2px 0 0 1px; align-items: center; padding-left: 6px; }
.bad { background: #ffc3cb; color: #9c1c28; margin: 5px 0 3px 4px; }
.good { background: #c6edce; color: #1e6b2c; margin: 3px 4px 5px 3px; }
.mid { background: #feea97; color: #94660d; margin: 3px 0 5px 4px; }
.scroller {
    grid-column: 3;
    grid-row: 1 / 3;
    display: flex;
    flex-direction: column;
    margin-left: 5px;
    border-left: 1px solid #ccc;
}
.scroller button { flex: 1; display: flex; align-items: center; justify-content: center; }
.scroller button + button { border-top: 1px solid #ccc; }
.up { transform: rotate(180deg); }

/* 编辑栏 */
.formula { display: flex; align-items: flex-start; flex: none; height: 65px; padding-top: 8px; }
.namebox {
    width: 14px;
    height: 28px;
    background: #fff;
    border: 1px solid #d0d0d0;
    border-left: 0;
    border-radius: 0 4px 4px 0;
}
.dots { width: 2px; height: 10px; margin: 9px 10px 0 9px; background: repeating-linear-gradient(#333 0 2px, transparent 2px 4px); }
.fx {
    display: flex;
    align-items: center;
    justify-content: space-between;
    width: 73px;
    height: 28px;
    padding: 0 5px;
    background: #fff;
    border: 1px solid #d0d0d0;
    border-radius: 4px;
}
.fx button { display: flex; }
.fx .fxi { font: italic 19px/20px "Liberation Serif", serif; }
.fbar {
    flex: 1;
    height: 50px;
    margin-left: 4px;
    border: 1px solid #d0d0d0;
    border-right: 0;
    border-radius: 4px 0 0 4px;
    background: #fff;
}

/* 工作表 */
.sheet { position: relative; flex: 1; min-height: 0; overflow: hidden; background: #fff; }
table {
    width: 1900px;
    margin-left: -44px;
    table-layout: fixed;
    border-collapse: collapse;
    font-family: "Noto Sans CJK SC", sans-serif;
}
.ca { width: 400px; }
.cb { width: 310px; }
.cc { width: 232px; }
.cd { width: 272px; }
.ce { width: 137px; }
th {
    height: 34px;
    padding: 2px 0 0;
    background: #efefef;
    border-right: 1px solid #cfcfcf;
    border-bottom: 1px solid #bbb;
    color: #444;
    font-size: 25px;
    font-weight: 400;
    line-height: 30px;
}
th.cur { background: #e0e0e0; border-bottom: 2px solid #217346; color: #217346; }
td {
    height: 42px;
    padding: 0 0 4px;
    border: 1px solid #e1e1e1;
    text-align: center;
    color: #000;
    font-size: 29px;
    line-height: 36px;
}
.head td { height: 124px; }
.blank td { height: 42px; }
td.title { padding-bottom: 12px; background: #70ad47; border-color: #70ad47; color: #fff; font-size: 61px; line-height: 80px; }
.k { border: 1px solid #000; }
.orange, .blue.k { color: #fff; font-size: 28px; }
.orange { background: #ed7d31; }
.blue.k { background: #4472c4; }
.sel { position: relative; }
.sel::after { content: ""; position: absolute; inset: -1px; border: 2px solid #217346; }
.chart { position: absolute; left: 836px; top: 194px; }
.chart text { text-anchor: middle; font-family: "Noto Sans CJK SC", sans-serif; }
.chart .t-title { font-size: 36px; font-weight: 700; }
.chart .t-code { font: 600 40px "Open Sans", sans-serif; text-anchor: start; }
.t-box { font-size: 23px; }
.t-box .num { font-size: 25px; }
.chart .t-box text { font-family: "Open Sans", "Noto Sans CJK SC", sans-serif; }
.t-bubble { font-size: 18px; fill: #fff; }
.t-foot { font-size: 41px; font-weight: 700; }
.cursor { position: absolute; left: 789px; top: 377px; }

/* 标签与状态栏 */
.tabs {
    display: flex;
    align-items: center;
    flex: none;
    height: 32px;
    padding: 0 0 2px 15px;
    border-top: 1px solid #d4d4d4;
    font-size: 14px;
    white-space: nowrap;
}
.tabs a { padding: 0 12px 0 13px; line-height: 20px; border-right: 1px solid #c8c8c8; }
.tabs .active { align-self: flex-start; height: 28px; margin: -1px 5px 0 2px; padding: 3px 8px; background: #fff; border: 0; border-radius: 0 0 5px 5px; }
.active span { display: block; border-bottom: 2px solid #217346; }
.add { display: flex; margin-left: 41px; }
.hscroll { display: flex; align-items: center; margin-left: auto; width: 39%; min-width: 680px; }
.hscroll .dots { margin: 2px 19px 0 10px; }
.bar { flex: 1; height: 9px; margin-left: 5px; background: #6f6f6f; border-radius: 5px 0 0 5px; }
.status {
    display: flex;
    align-items: center;
    justify-content: space-between;
    flex: none;
    height: 22px;
    padding-left: 5px;
    background: #f4f4f4;
    border-top: 1px solid #fff;
}
.views { display: flex; align-items: center; align-self: stretch; }
.views button { width: 40px; height: 100%; display: flex; align-items: center; justify-content: center; }
.views .on { background: #dedede; }
.minus { width: 8px; height: 1px; margin: 0 8px 0 7px; background: #222; }
.zoom { position: relative; width: 69px; height: 1px; background: #666; }
.tick, .thumb { position: absolute; }
.tick { left: 49px; top: -3px; width: 1px; height: 7px; background: #666; }
.thumb { left: 60px; top: -5px; width: 5px; height: 11px; background: #555; }

/* 任务栏 */
.taskbar {
    display: flex;
    justify-content: space-between;
    flex: none;
    height: 40px;
    overflow: hidden;
    background: linear-gradient(90deg, #d4eedd, #dbeed3 25%, #d9eecb 70%, #d6ecd4 88%, #cfebdc);
}
.apps { display: flex; padding-left: 2px; }
.apps button { position: relative; width: 49px; height: 40px; display: flex; align-items: center; justify-content: center; }
.apps .run::after { content: ""; position: absolute; left: 4px; right: 5px; bottom: 0; height: 2px; background: #1f75ab; }
.apps .front { background: #eaf6e8; }
.apps .front::after { left: 0; right: 0; }
.adobe { font: 700 12px "Open Sans", sans-serif; text-anchor: middle; }
.office { font: 700 10px "Open Sans", sans-serif; text-anchor: middle; fill: #fff; }
.tray { display: flex; align-items: center; }
.tray > svg { margin: 0 4px; }
.tray > svg:nth-child(1), .tray > svg:nth-child(3) { margin: 0 6px; }
.ime { margin: 0 9px 0 4px; font-size: 16px; line-height: 18px; color: #666; }
.clock { width: 36px; margin-left: 13px; padding-right: 10px; margin-right: -14px; text-align: right; line-height: 19px; }
```
